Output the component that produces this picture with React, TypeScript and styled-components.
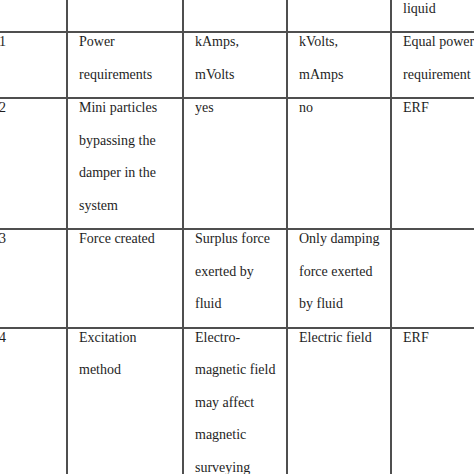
import styled, { createGlobalStyle } from "styled-components";

const GlobalStyle = createGlobalStyle`
    html, body {
        margin: 0;
        padding: 0;
        background: #ffffff;
        overflow: hidden;
    }
`;

const Page = styled.div`
    width: 474px;
    height: 474px;
    overflow: hidden;
    background: #ffffff;
`;

const Table = styled.table<{ $width: number }>`
    width: ${props => props.$width}px;
    border-collapse: collapse;
    table-layout: fixed;
    margin: -35px 0 0 -14px;
    font-family: "Liberation Serif", "Times New Roman", serif;
    font-size: 14px;
    color: #1e1e1e;
`;

const Col = styled.col<{ $width: number }>`
    width: ${props => props.$width}px;
`;

const Cell = styled.td`
    border: 2px solid #4f4f4f;
    padding: 0 8px 6px 11px;
    vertical-align: top;
    white-space: nowrap;
    div{
        margin-top: -7px;
        line-height: 32.5px;
    }
`;

const widths = [80, 116, 104, 104, 110];

const rows: string[][][] = [
    [[""], [""], [""], [""], ["Electrorheological", "liquid"]],
    [["1"], ["Power", "requirements"], ["kAmps,", "mVolts"], ["kVolts,", "mAmps"], ["Equal power", "requirement"]],
    [["2"], ["Mini particles", "bypassing the", "damper in the", "system"], ["yes"], ["no"], ["ERF"]],
    [["3"], ["Force created"], ["Surplus force", "exerted by", "fluid"], ["Only damping", "force exerted", "by fluid"], [""]],
    [["4"], ["Excitation", "method"], ["Electro-", "magnetic field", "may affect", "magnetic", "surveying", "systems"], ["Electric field"], ["ERF"]],
];

function App(){
    return (
        <Page>
            <GlobalStyle />
            <Table $width={widths.reduce((a, b) => a + b, 0)}>
                <colgroup>
                    {widths.map((w, i) => <Col key={i} $width={w} />)}
                </colgroup>
                <tbody>
                    {rows.map((row, r) => (
                        <tr key={r}>
                            {row.map((lines, c) => (
                                <Cell key={c}>
                                    <div>
                                        {lines.map((line, i) => (
                                            <span key={i}>{i > 0 && <br />}{line || "\u00a0"}</span>
                                        ))}
                                    </div>
                                </Cell>
                            ))}
                        </tr>
                    ))}
                </tbody>
            </Table>
        </Page>
    );
}

export default App;
